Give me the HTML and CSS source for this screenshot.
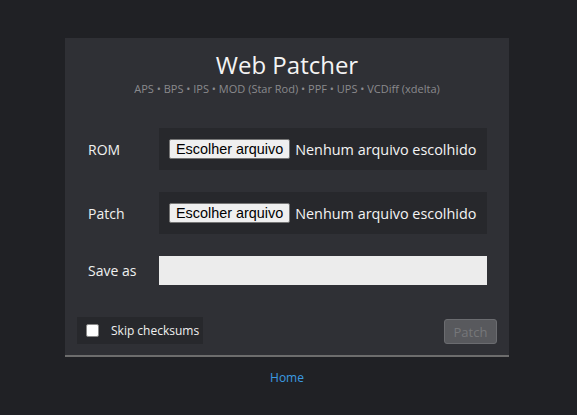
FILE: index.html
```html
<!DOCTYPE html>
<html>
  <head>
    <meta charset="utf-8" />
    <title>Web Patcher</title>
    <meta name="viewport" content="width=device-width, initial-scale=1" />
    <link rel="stylesheet" href="styles.css">
  </head>

  <body>
    <div class="card">
      <h1>Web Patcher</h1>
      <p class="formats">APS • BPS • IPS • MOD (Star Rod) • PPF • UPS • VCDiff (xdelta)</p>

      <div class="row">
        <span class="label">ROM</span>
        <div class="filebox">
          <label class="picker">
            <span class="pickbtn">Escolher arquivo</span>
            <span class="pickname">Nenhum arquivo escolhido</span>
            <input type="file" id="romFile" />
          </label>
        </div>
      </div>

      <div class="row">
        <span class="label">Patch</span>
        <div class="filebox">
          <label class="picker">
            <span class="pickbtn">Escolher arquivo</span>
            <span class="pickname">Nenhum arquivo escolhido</span>
            <input type="file" id="patchFile" />
          </label>
        </div>
      </div>

      <div class="row">
        <span class="label">Save as</span>
        <input type="text" class="saveas" id="saveAs" />
      </div>

      <div class="footer">
        <label class="skip">
          <span class="box"></span>
          Skip checksums
        </label>
        <button id="patchBtn" disabled>Patch</button>
      </div>
    </div>

    <div class="links">
      <a href="#">Home</a>
    </div>
  </body>
</html>
```

FILE: styles.css
```css
body {
  background: #202125;
  margin: 0;
  padding-right: 3px;
  font-family: "Open Sans", sans-serif;
  color: #f0f0f0;
}

.card {
  width: 444px;
  margin: 38px auto 0;
  background: #2f3035;
  border-bottom: 2px solid #6d6d6d;
  padding: 10px 0 11px;
  box-sizing: border-box;
}

h1 {
  margin: 0;
  text-align: center;
  font-weight: normal;
  font-size: 24px;
  line-height: 33px;
  color: #f4f4f4;
}

.formats {
  margin: 0 0 32px;
  text-align: center;
  font-size: 11px;
  line-height: 15px;
  color: #8a8a8d;
}

.row {
  display: flex;
  align-items: center;
  padding: 0 22px 0 23px;
  margin-bottom: 22px;
}

.label {
  width: 71px;
  font-size: 14px;
}

.filebox {
  width: 328px;
  height: 42px;
  background: #27282c;
  display: flex;
  align-items: center;
  padding-left: 10px;
  box-sizing: border-box;
}

.picker {
  display: flex;
  align-items: center;
}

.picker input {
  display: none;
}

.pickbtn {
  font-family: "Liberation Sans", Arial, sans-serif;
  font-size: 14.4px;
  color: #000;
  background: #efefef;
  border: 1px solid #767676;
  border-radius: 2px;
  padding: 0 6px;
  height: 20px;
  line-height: 18px;
  box-sizing: border-box;
}

.pickname {
  margin-left: 5px;
  font-size: 14.4px;
  color: #f4f4f4;
}

.saveas {
  width: 328px;
  height: 29px;
  border: none;
  background: #ececec;
  margin: 0;
  padding: 0 6px;
  box-sizing: border-box;
}

.footer {
  display: flex;
  justify-content: space-between;
  align-items: center;
  padding: 10px 12px 0;
}

.skip {
  display: flex;
  align-items: center;
  background: #27282c;
  height: 27px;
  padding: 0 4px 0 9px;
  font-size: 12px;
  color: #f0f0f0;
}

.box {
  width: 11px;
  height: 11px;
  background: #fff;
  border: 1px solid #888;
  border-radius: 2px;
  margin-right: 12px;
}

button {
  font-family: "Open Sans", sans-serif;
  font-size: 13px;
  width: 53px;
  height: 25px;
  padding: 0;
  background: #58595d;
  color: #76777a;
  border: 1px solid #6b6c70;
  border-radius: 3px;
  margin-top: 2px;
}

.links {
  text-align: center;
  padding-top: 12px;
  font-size: 12px;
}

.links a {
  color: #3b9be2;
  text-decoration: none;
}
```
